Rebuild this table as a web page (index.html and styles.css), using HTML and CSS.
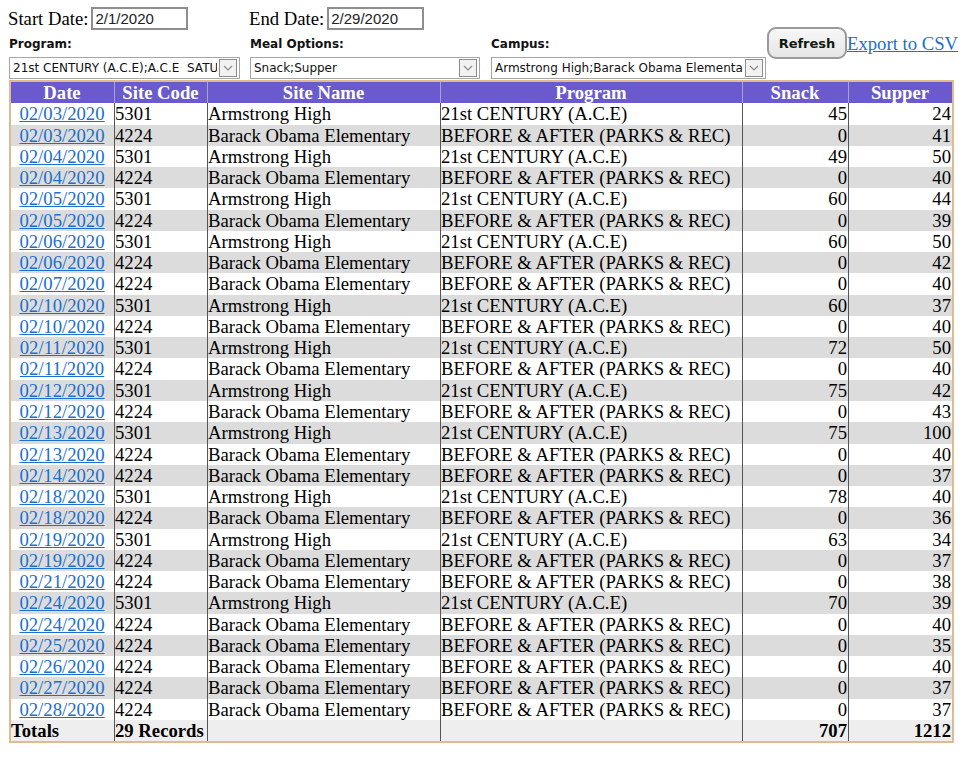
FILE: index.html
```html
<!DOCTYPE html>
<html lang="en">
<head>
<meta charset="utf-8">
<title>Meal Counts</title>
<link rel="stylesheet" href="styles.css">
</head>
<body>
<div class="controls">
  <div class="date-field d1"><span class="date-label">Start Date:</span><input class="date-input" type="text" value="2/1/2020"></div>
  <div class="date-field d2"><span class="date-label">End Date:</span><input class="date-input" type="text" value="2/29/2020"></div>

  <div class="field f1">
    <div class="field-label">Program:</div>
    <div class="select w-program"><span class="select-text">21st CENTURY (A.C.E);A.C.E&nbsp; SATURDAY</span><span class="select-arrow"><svg width="10" height="6" viewBox="0 0 10 6"><path d="M1 1 L5 5 L9 1" fill="none" stroke="#8a8a8a" stroke-width="1.2"/></svg></span></div>
  </div>
  <div class="field f2">
    <div class="field-label">Meal Options:</div>
    <div class="select w-meal"><span class="select-text">Snack;Supper</span><span class="select-arrow"><svg width="10" height="6" viewBox="0 0 10 6"><path d="M1 1 L5 5 L9 1" fill="none" stroke="#8a8a8a" stroke-width="1.2"/></svg></span></div>
  </div>
  <div class="field f3">
    <div class="field-label">Campus:</div>
    <div class="select w-campus"><span class="select-text">Armstrong High;Barack Obama Elementary</span><span class="select-arrow"><svg width="10" height="6" viewBox="0 0 10 6"><path d="M1 1 L5 5 L9 1" fill="none" stroke="#8a8a8a" stroke-width="1.2"/></svg></span></div>
  </div>
  <div class="actions">
    <button class="refresh" type="button">Refresh</button><a class="export" href="#">Export to CSV</a>
  </div>
</div>

<table class="grid">
  <colgroup>
    <col class="col-date"><col class="col-code"><col class="col-name"><col class="col-prog"><col class="col-snack"><col class="col-supper">
  </colgroup>
  <thead>
    <tr><th>Date</th><th>Site Code</th><th>Site Name</th><th>Program</th><th>Snack</th><th>Supper</th></tr>
  </thead>
  <tbody>
    <tr><td class="c-date"><a href="#">02/03/2020</a></td><td>5301</td><td>Armstrong High</td><td>21st CENTURY (A.C.E)</td><td class="num">45</td><td class="num">24</td></tr>
    <tr><td class="c-date"><a href="#">02/03/2020</a></td><td>4224</td><td>Barack Obama Elementary</td><td>BEFORE &amp; AFTER (PARKS &amp; REC)</td><td class="num">0</td><td class="num">41</td></tr>
    <tr><td class="c-date"><a href="#">02/04/2020</a></td><td>5301</td><td>Armstrong High</td><td>21st CENTURY (A.C.E)</td><td class="num">49</td><td class="num">50</td></tr>
    <tr><td class="c-date"><a href="#">02/04/2020</a></td><td>4224</td><td>Barack Obama Elementary</td><td>BEFORE &amp; AFTER (PARKS &amp; REC)</td><td class="num">0</td><td class="num">40</td></tr>
    <tr><td class="c-date"><a href="#">02/05/2020</a></td><td>5301</td><td>Armstrong High</td><td>21st CENTURY (A.C.E)</td><td class="num">60</td><td class="num">44</td></tr>
    <tr><td class="c-date"><a href="#">02/05/2020</a></td><td>4224</td><td>Barack Obama Elementary</td><td>BEFORE &amp; AFTER (PARKS &amp; REC)</td><td class="num">0</td><td class="num">39</td></tr>
    <tr><td class="c-date"><a href="#">02/06/2020</a></td><td>5301</td><td>Armstrong High</td><td>21st CENTURY (A.C.E)</td><td class="num">60</td><td class="num">50</td></tr>
    <tr><td class="c-date"><a href="#">02/06/2020</a></td><td>4224</td><td>Barack Obama Elementary</td><td>BEFORE &amp; AFTER (PARKS &amp; REC)</td><td class="num">0</td><td class="num">42</td></tr>
    <tr><td class="c-date"><a href="#">02/07/2020</a></td><td>4224</td><td>Barack Obama Elementary</td><td>BEFORE &amp; AFTER (PARKS &amp; REC)</td><td class="num">0</td><td class="num">40</td></tr>
    <tr><td class="c-date"><a href="#">02/10/2020</a></td><td>5301</td><td>Armstrong High</td><td>21st CENTURY (A.C.E)</td><td class="num">60</td><td class="num">37</td></tr>
    <tr><td class="c-date"><a href="#">02/10/2020</a></td><td>4224</td><td>Barack Obama Elementary</td><td>BEFORE &amp; AFTER (PARKS &amp; REC)</td><td class="num">0</td><td class="num">40</td></tr>
    <tr><td class="c-date"><a href="#">02/11/2020</a></td><td>5301</td><td>Armstrong High</td><td>21st CENTURY (A.C.E)</td><td class="num">72</td><td class="num">50</td></tr>
    <tr><td class="c-date"><a href="#">02/11/2020</a></td><td>4224</td><td>Barack Obama Elementary</td><td>BEFORE &amp; AFTER (PARKS &amp; REC)</td><td class="num">0</td><td class="num">40</td></tr>
    <tr><td class="c-date"><a href="#">02/12/2020</a></td><td>5301</td><td>Armstrong High</td><td>21st CENTURY (A.C.E)</td><td class="num">75</td><td class="num">42</td></tr>
    <tr><td class="c-date"><a href="#">02/12/2020</a></td><td>4224</td><td>Barack Obama Elementary</td><td>BEFORE &amp; AFTER (PARKS &amp; REC)</td><td class="num">0</td><td class="num">43</td></tr>
    <tr><td class="c-date"><a href="#">02/13/2020</a></td><td>5301</td><td>Armstrong High</td><td>21st CENTURY (A.C.E)</td><td class="num">75</td><td class="num">100</td></tr>
    <tr><td class="c-date"><a href="#">02/13/2020</a></td><td>4224</td><td>Barack Obama Elementary</td><td>BEFORE &amp; AFTER (PARKS &amp; REC)</td><td class="num">0</td><td class="num">40</td></tr>
    <tr><td class="c-date"><a href="#">02/14/2020</a></td><td>4224</td><td>Barack Obama Elementary</td><td>BEFORE &amp; AFTER (PARKS &amp; REC)</td><td class="num">0</td><td class="num">37</td></tr>
    <tr><td class="c-date"><a href="#">02/18/2020</a></td><td>5301</td><td>Armstrong High</td><td>21st CENTURY (A.C.E)</td><td class="num">78</td><td class="num">40</td></tr>
    <tr><td class="c-date"><a href="#">02/18/2020</a></td><td>4224</td><td>Barack Obama Elementary</td><td>BEFORE &amp; AFTER (PARKS &amp; REC)</td><td class="num">0</td><td class="num">36</td></tr>
    <tr><td class="c-date"><a href="#">02/19/2020</a></td><td>5301</td><td>Armstrong High</td><td>21st CENTURY (A.C.E)</td><td class="num">63</td><td class="num">34</td></tr>
    <tr><td class="c-date"><a href="#">02/19/2020</a></td><td>4224</td><td>Barack Obama Elementary</td><td>BEFORE &amp; AFTER (PARKS &amp; REC)</td><td class="num">0</td><td class="num">37</td></tr>
    <tr><td class="c-date"><a href="#">02/21/2020</a></td><td>4224</td><td>Barack Obama Elementary</td><td>BEFORE &amp; AFTER (PARKS &amp; REC)</td><td class="num">0</td><td class="num">38</td></tr>
    <tr><td class="c-date"><a href="#">02/24/2020</a></td><td>5301</td><td>Armstrong High</td><td>21st CENTURY (A.C.E)</td><td class="num">70</td><td class="num">39</td></tr>
    <tr><td class="c-date"><a href="#">02/24/2020</a></td><td>4224</td><td>Barack Obama Elementary</td><td>BEFORE &amp; AFTER (PARKS &amp; REC)</td><td class="num">0</td><td class="num">40</td></tr>
    <tr><td class="c-date"><a href="#">02/25/2020</a></td><td>4224</td><td>Barack Obama Elementary</td><td>BEFORE &amp; AFTER (PARKS &amp; REC)</td><td class="num">0</td><td class="num">35</td></tr>
    <tr><td class="c-date"><a href="#">02/26/2020</a></td><td>4224</td><td>Barack Obama Elementary</td><td>BEFORE &amp; AFTER (PARKS &amp; REC)</td><td class="num">0</td><td class="num">40</td></tr>
    <tr><td class="c-date"><a href="#">02/27/2020</a></td><td>4224</td><td>Barack Obama Elementary</td><td>BEFORE &amp; AFTER (PARKS &amp; REC)</td><td class="num">0</td><td class="num">37</td></tr>
    <tr><td class="c-date"><a href="#">02/28/2020</a></td><td>4224</td><td>Barack Obama Elementary</td><td>BEFORE &amp; AFTER (PARKS &amp; REC)</td><td class="num">0</td><td class="num">37</td></tr>
  </tbody>
  <tfoot>
    <tr><td>Totals</td><td>29 Records</td><td></td><td></td><td class="num">707</td><td class="num">1212</td></tr>
  </tfoot>
</table>
</body>
</html>
```

FILE: styles.css
```css
html, body {
  background: #ffffff;
}

body {
  margin: 7px 8px 0 8px;
  font-family: "Liberation Serif", "Times New Roman", serif;
  font-size: 18.7px;
  color: #000000;
}

/* ---------- filter controls ---------- */
.controls {
  display: grid;
  grid-template-columns: 241px 241px 277px auto;
  grid-template-rows: 24px auto;
}

.date-field {
  display: flex;
  align-items: center;
  height: 23px;
  grid-row: 1;
}

.d1 { grid-column: 1; }
.d2 { grid-column: 2; }

.date-label {
  margin-right: 3px;
  white-space: nowrap;
}

.date-input {
  box-sizing: border-box;
  width: 97px;
  height: 23px;
  margin: 0;
  padding: 0 0 0 2px;
  border: 2px solid #8e8e8e;
  font-family: "Liberation Sans", Arial, sans-serif;
  font-size: 15px;
  color: #222222;
  background: #ffffff;
  outline: none;
}

.field {
  grid-row: 2;
  padding-left: 1px;
}

.f1 { grid-column: 1; }
.f2 { grid-column: 2; }
.f3 { grid-column: 3; }

.field-label {
  margin-top: 5px;
  height: 16px;
  line-height: 16px;
  font-family: "DejaVu Sans", Verdana, sans-serif;
  font-weight: bold;
  font-size: 12px;
  color: #111111;
}

.select {
  box-sizing: border-box;
  display: flex;
  align-items: center;
  margin-top: 5px;
  height: 22px;
  border: 1px solid #a6a6a6;
  background: #ffffff;
  padding-left: 3px;
  padding-right: 2px;
}

.w-program { width: 231px; }
.w-meal { width: 230px; }
.w-campus { width: 275px; }

.select-text {
  flex: 1;
  overflow: hidden;
  white-space: nowrap;
  font-family: "DejaVu Sans", Verdana, sans-serif;
  font-size: 12px;
  color: #111111;
}

.select-arrow {
  box-sizing: border-box;
  flex: none;
  width: 18px;
  height: 18px;
  margin-left: 2px;
  border: 1px solid #8c8c8c;
  background: #f2f2f2;
  display: flex;
  align-items: center;
  justify-content: center;
}

.actions {
  grid-column: 4;
  grid-row: 1 / 3;
  padding-top: 20px;
  display: flex;
  align-items: center;
  align-self: start;
  height: 32px;
}

.refresh {
  box-sizing: border-box;
  width: 80px;
  height: 32px;
  margin: 0;
  padding: 0;
  border: 2px solid #9a9a9a;
  border-radius: 9px;
  background: linear-gradient(#f7f7f7, #e6e6e6);
  font-family: "DejaVu Sans", Verdana, sans-serif;
  font-weight: bold;
  font-size: 13px;
  color: #101a10;
}

.export {
  color: #1a6fd0;
  text-decoration: underline;
  white-space: nowrap;
  padding-top: 2px;
}

/* ---------- data grid ---------- */
.grid {
  margin-top: 1px;
  margin-left: 1px;
  width: 945px;
  table-layout: fixed;
  border-collapse: separate;
  border-spacing: 0;
  border: 2px solid #dfbb8e;
}

.col-date { width: 103px; }
.col-code { width: 93px; }
.col-name { width: 233px; }
.col-prog { width: 302px; }
.col-snack { width: 106px; }
.col-supper { width: 104px; }

.grid th,
.grid td {
  padding: 0 1px 0 0;
  height: 21.26px;
  line-height: 21.26px;
  white-space: nowrap;
  overflow: hidden;
  vertical-align: middle;
  text-align: left;
}

.grid th + th,
.grid td + td {
  border-left: 1px solid #555555;
}

.grid thead th {
  background: #6a5acd;
  color: #ffffff;
  font-weight: bold;
  text-align: center;
}

.grid thead th + th {
  border-left-color: #a9a3c8;
}

.grid tbody tr:nth-child(odd) td {
  background: #ffffff;
}

.grid tbody tr:nth-child(even) td {
  background: #dcdcdc;
}

.grid td.c-date {
  text-align: center;
}

.grid td.c-date a {
  color: #1a6fd0;
  text-decoration: underline;
}

.grid td.num {
  text-align: right;
}

.grid tfoot td {
  background: #eeeeee;
  font-weight: bold;
}
```
